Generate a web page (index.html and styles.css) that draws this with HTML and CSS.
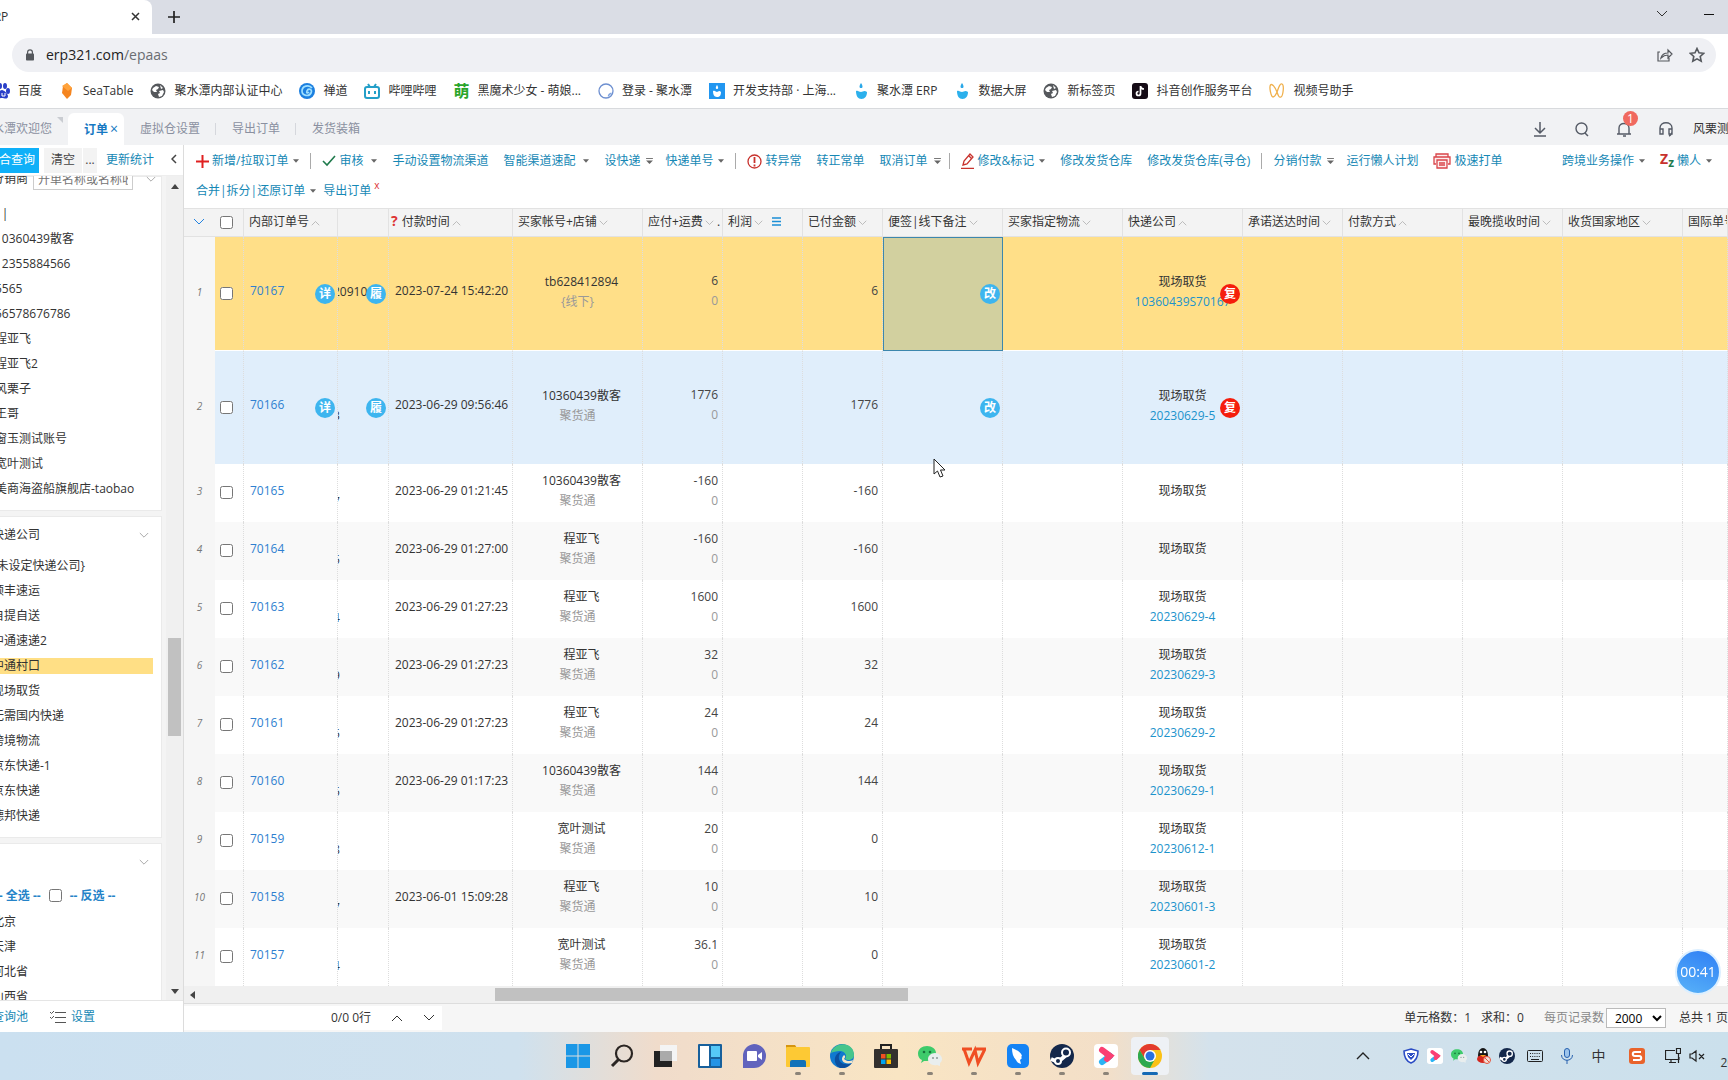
FILE: index.html
```html
<!DOCTYPE html>
<html lang="zh-CN">
	<head>
		<meta charset="utf-8">
		<title>聚水潭 ERP</title>
		<link rel="stylesheet" href="styles.css">
	</head>
	<body>
		<!-- 公用图标 -->
		<svg class="defs" width="0" height="0">
			<symbol id="up" viewBox="0 0 12 8"><path d="M1 7l5-5 5 5" fill="none" stroke="currentColor"/></symbol>
			<symbol id="down" viewBox="0 0 12 8"><path d="M1 1l5 5 5-5" fill="none" stroke="currentColor"/></symbol>
			<symbol id="caret" viewBox="0 0 7 4"><path d="M0 0h7L3.500 4z" fill="#666"/></symbol>
			<symbol id="caret2" viewBox="0 0 8 7"><path d="M0 .5h8" stroke="#555"/><path d="M0 3h8L4 7z" fill="#666"/></symbol>
			<symbol id="globe" viewBox="0 0 16 16"><circle cx="8" cy="8" r="7.500" fill="#55585c"/><path d="M3 5l3-2 3 1-1 2-2 1 1 2H4L2 7zM9 8l4-1 1 2-2 4-3 1-1-3 2-1zM10 2l3 3-2 1z" fill="#fff"/></symbol>
			<symbol id="drop" viewBox="0 0 16 16"><path d="M8 0c2 3 2 5 0 5S6 3 8 0z" fill="#29a7e8"/><path d="M3 8c2-1 3 1 5 1s3-2 6 0c0 4-2 7-5.500 7S3 13 3 8z" fill="#2cb0ec"/></symbol>
			<symbol id="wechat" viewBox="0 0 24 24"><path d="M9 2c5 0 9 3 9 7s-4 8-9 8l-3 0-3 2 1-3C1 15 0 12 0 9.500 0 5 4 2 9 2z" fill="#3ecb6b"/><circle cx="6" cy="8" r="1.300" fill="#17733a"/><circle cx="12" cy="8" r="1.300" fill="#17733a"/><path d="M17 9c4 0 7 3 7 6 0 2-1 3-2 4v3l-3-1c-5 1-9-2-9-6 0-3 3-6 7-6z" fill="#e9eeee"/><circle cx="15" cy="14" r="1" fill="#8a9a96"/><circle cx="19" cy="14" r="1" fill="#8a9a96"/></symbol>
			<symbol id="steam" viewBox="0 0 24 24"><circle cx="12" cy="12" r="12" fill="#14284b"/><path d="M1 15l7 3 7-6" stroke="#fff" stroke-width="4" fill="none"/><circle cx="16" cy="8.500" r="4" fill="#14284b" stroke="#fff" stroke-width="2"/><circle cx="8" cy="17" r="3" fill="#14284b" stroke="#fff" stroke-width="2"/></symbol>
			<symbol id="play" viewBox="0 0 24 24"><rect width="24" height="24" rx="4" fill="#fff"/><path d="M8 6l8 6" stroke="#fb3f72" stroke-width="6" stroke-linecap="round"/><path d="M8 18l8-6" stroke="#2bb4f4" stroke-width="6" stroke-linecap="round"/><path d="M13 10l3 2-3 3" stroke="#fb3f72" stroke-width="6" fill="none" stroke-linecap="round"/></symbol>
		</svg>

		<!-- 浏览器标签 -->
		<div class="tabs">
			<div class="tab"><span>ERP</span><button aria-label="关闭"><svg width="9" height="9" viewBox="0 0 9 9"><path d="M1 1l7 7M8 1L1 8" stroke="#333" stroke-width="1.500"/></svg></button></div>
			<button class="newtab" aria-label="新标签"><svg width="12" height="12" viewBox="0 0 12 12"><path d="M6 0v12M0 6h12" stroke="#222" stroke-width="1.700"/></svg></button>
			<div class="win">
				<button aria-label="搜索标签"><svg width="12" height="8"><use href="#down"/></svg></button>
				<button aria-label="最小化"><svg width="10" height="8"><path d="M0 4.500h10" stroke="#111"/></svg></button>
			</div>
		</div>
		<div class="address">
			<div class="url">
				<svg width="8" height="12" viewBox="0 0 10 14"><rect y="5" width="10" height="9" rx="1" fill="#55585d"/><path d="M2 6V3.500a3 3 0 016 0V6" fill="none" stroke="#55585d" stroke-width="1.500"/></svg>
				<p>erp321.com<span>/epaas</span></p>
				<button aria-label="分享"><svg width="16" height="16" viewBox="0 0 16 16"><path d="M3 5H1v9h11v-3M4 11c1-4 4-5 7-5V3l4 4-4 4V8C8 8 6 9 4 11z" fill="none" stroke="#55585d" stroke-width="1.200"/></svg></button>
				<button aria-label="收藏"><svg width="16" height="16" viewBox="0 0 16 16"><path d="M8 1.500l2 4.300 4.700.5-3.500 3.200 1 4.700L8 11.800l-4.200 2.400 1-4.700L1.300 6.300 6 5.800z" fill="none" stroke="#55585d" stroke-width="1.600"/></svg></button>
			</div>
		</div>
		<div class="bookmarks">
			<a href="#"><svg width="16" height="16" viewBox="0 0 16 16"><g fill="#2a3fc8"><ellipse cx="2" cy="7" rx="2" ry="3"/><ellipse cx="6" cy="3" rx="2" ry="3"/><ellipse cx="11" cy="3" rx="2" ry="3"/><ellipse cx="14" cy="8" rx="2" ry="3"/><path d="M8 7c2 0 6 4 6 6 0 4-4 2-6 2s-6 2-6-2c0-2 4-6 6-6z"/></g><path d="M8 10v3h3v-3" stroke="#fff" fill="none"/></svg>百度</a>
			<a href="#"><svg width="16" height="16" viewBox="0 0 16 16"><path d="M8 0l5 5-1 7-4 4-5-6 1-7z" fill="#f5851f"/><path d="M8 0l5 5-4 3-6-5z" fill="#ffa33c"/></svg>SeaTable</a>
			<a href="#"><svg width="16" height="16"><use href="#globe"/></svg>聚水潭内部认证中心</a>
			<a href="#"><svg width="16" height="16" viewBox="0 0 16 16"><circle cx="8" cy="8" r="8" fill="#1b7fe0"/><path d="M13 5C10 1 3 3 3 8s7 6 9 2-3-5-4-2 1 2 2 1" fill="none" stroke="#9fe0ff" stroke-width="1.700"/></svg>禅道</a>
			<a href="#"><svg width="16" height="16" viewBox="0 0 16 16"><rect x="1" y="4" width="14" height="11" rx="2" fill="none" stroke="#249fc8" stroke-width="2"/><path d="M4 1l2 3M12 1l-2 3M5 8v3M11 8v3" stroke="#249fc8" stroke-width="2"/></svg>哔哩哔哩</a>
			<a href="#"><b class="moe">萌</b>黑魔术少女 - 萌娘...</a>
			<a href="#"><svg width="16" height="16" viewBox="0 0 16 16"><circle cx="8" cy="8" r="7" fill="none" stroke="#6d8fd0" stroke-width="1.300"/><path d="M14 10c-2-1-5 2-4 4z" fill="#7fa3e0"/></svg>登录 - 聚水潭</a>
			<a href="#"><svg width="16" height="16" viewBox="0 0 16 16"><rect width="16" height="16" fill="#2196f0"/><path d="M8 2c2 3 1 4 0 4S6 5 8 2zM4 8c2-1 3 1 4 1s2-2 4 0c0 3-1 5-4 5s-4-3-4-6z" fill="#fff"/></svg>开发支持部 · 上海...</a>
			<a href="#"><svg width="16" height="16"><use href="#drop"/></svg>聚水潭 ERP</a>
			<a href="#"><svg width="16" height="16"><use href="#drop"/></svg>数据大屏</a>
			<a href="#"><svg width="16" height="16"><use href="#globe"/></svg>新标签页</a>
			<a href="#"><svg width="16" height="16" viewBox="0 0 16 16"><rect width="16" height="16" rx="3" fill="#150b16"/><path d="M8.500 3v7.500a2 2 0 11-2-2M8.500 3c0 2 1.500 3 3.500 3" fill="none" stroke="#fff" stroke-width="1.700"/></svg>抖音创作服务平台</a>
			<a href="#"><svg width="16" height="16" viewBox="0 0 16 16"><path d="M8 9C6 4 3 0 1.500 2S2 14 4 14s3-3 4-5 2.500-9 5-8 1 12-1 13-3-2-4-5z" fill="none" stroke="#f0b04c" stroke-width="1.300"/></svg>视频号助手</a>
		</div>

		<!-- 系统标签 -->
		<div class="apptabs">
			<a href="#" class="first">聚水潭欢迎您</a>
			<a href="#" class="on">订单<i>×</i></a>
			<a href="#">虚拟仓设置</a>
			<a href="#">导出订单</a>
			<a href="#">发货装箱</a>
			<div class="user">
				<button aria-label="下载"><svg width="14" height="16" viewBox="0 0 14 16"><path d="M7 1v10M2 7l5 5 5-5M1 15h12" fill="none" stroke="#555b66" stroke-width="1.500"/></svg></button>
				<button aria-label="搜索"><svg width="14" height="16" viewBox="0 0 14 16"><circle cx="6.500" cy="7.500" r="5.500" fill="none" stroke="#555b66" stroke-width="1.400"/><path d="M10 12l3 3" stroke="#555b66" stroke-width="1.500"/></svg></button>
				<button aria-label="消息"><svg width="14" height="16" viewBox="0 0 14 16"><path d="M0 13h14M2 13V7c0-6 10-6 10 0v6M6 15h3" fill="none" stroke="#555b66" stroke-width="1.400"/></svg><em>1</em></button>
				<button aria-label="客服"><svg width="14" height="16" viewBox="0 0 14 16"><path d="M1 11V7c0-7 12-7 12 0v4c0 2-1 3-3 4M1 8h3v5H1zM10 8h3v5h-3z" fill="none" stroke="#555b66" stroke-width="1.400"/></svg></button>
				<span>风栗测试</span>
			</div>
		</div>

		<div class="main">
			<!-- 左侧查询 -->
			<div class="side">
				<div class="sidetop">
					<button class="query">组合查询</button>
					<button class="clear">清空</button>
					<button class="more">...</button>
					<a href="#">更新统计</a>
					<button class="fold" aria-label="收起"><svg width="6" height="10" viewBox="0 0 6 10"><path d="M5 1L1 5l4 4" fill="none" stroke="#444" stroke-width="1.500"/></svg></button>
				</div>
				<div class="sidebody">
					<div class="panels">
						<div class="panel">
							<div class="dealer"><label for="dealer">分销商</label><input id="dealer" type="text" placeholder="开单名称或名称收"><svg width="10" height="7"><use href="#down"/></svg></div>
							<ul class="in">
								<li>1|</li>
								<li>10360439散客</li>
								<li>12355884566</li>
								<li>5565</li>
								<li>56578676786</li>
								<li>程亚飞</li>
								<li>程亚飞2</li>
								<li>风栗子</li>
								<li>王哥</li>
								<li>窗玉测试账号</li>
								<li>宽叶测试</li>
								<li>美商海盗船旗舰店-taobao</li>
							</ul>
						</div>
						<div class="panel">
							<h4>快递公司<svg width="10" height="7"><use href="#down"/></svg></h4>
							<ul>
								<li>{未设定快递公司}</li>
								<li>顺丰速运</li>
								<li>自提自送</li>
								<li>中通速递2</li>
								<li class="sel"><span>中通村口</span></li>
								<li>现场取货</li>
								<li>无需国内快递</li>
								<li>跨境物流</li>
								<li>京东快递-1</li>
								<li>京东快递</li>
								<li>德邦快递</li>
							</ul>
						</div>
						<div class="panel">
							<h4><svg width="10" height="7"><use href="#down"/></svg></h4>
							<div class="all"><a href="#">-- 全选 --</a><label><input type="checkbox"><span>-- 反选 --</span></label></div>
							<ul>
								<li>北京</li>
								<li>天津</li>
								<li>河北省</li>
								<li>山西省</li>
							</ul>
						</div>
					</div>
					<div class="vbar">
						<svg width="8" height="5" viewBox="0 0 10 6"><path d="M0 6l5-6 5 6z" fill="#444"/></svg>
						<i></i>
						<svg width="8" height="5" viewBox="0 0 10 6"><path d="M0 0l5 6 5-6z" fill="#444"/></svg>
					</div>
				</div>
				<div class="sidefoot">
					<a href="#">查询池</a>
					<a href="#"><svg width="16" height="12" viewBox="0 0 16 12"><path d="M5 1.500h11M5 6.500h11M5 11.500h11M0 1l1.500 1.500L4 0M0 6l1.500 1.500L4 5" fill="none" stroke="#555"/></svg>设置</a>
				</div>
			</div>

			<div class="content">
				<div class="tools">
					<div class="line">
						<button><svg width="13" height="13" viewBox="0 0 13 13"><path d="M6.500 0v13M0 6.500h13" stroke="#e02020" stroke-width="2"/></svg>新增/拉取订单<svg class="c" width="6" height="4"><use href="#caret"/></svg></button>
						<i></i>
						<button><svg width="14" height="12" viewBox="0 0 14 12"><path d="M1 6l4 4 8-9" fill="none" stroke="#1f7a4c" stroke-width="1.600"/></svg>审核<svg class="c w" width="6" height="4"><use href="#caret"/></svg></button>
						<button>手动设置物流渠道</button>
						<button>智能渠道速配<svg class="c w" width="6" height="4"><use href="#caret"/></svg></button>
						<button>设快递<svg class="c n" width="7" height="6"><use href="#caret2"/></svg></button>
						<button>快递单号<svg class="c" width="6" height="4"><use href="#caret"/></svg></button>
						<i></i>
						<button><svg width="15" height="15" viewBox="0 0 15 15"><circle cx="7.500" cy="7.500" r="6.500" fill="none" stroke="#c8322d" stroke-width="1.300"/><path d="M7.500 3v6M7.500 10.500v2" stroke="#c8322d" stroke-width="1.800"/></svg>转异常</button>
						<button>转正常单</button>
						<button>取消订单<svg class="c n" width="7" height="6"><use href="#caret2"/></svg></button>
						<i></i>
						<button><svg width="14" height="16" viewBox="0 0 14 16"><path d="M0 15.300h13M2 12l1-4 6-7 3 3-6 7zM8 3l3 3" fill="none" stroke="#c8322d" stroke-width="1.300"/></svg>修改&amp;标记<svg class="c" width="6" height="4"><use href="#caret"/></svg></button>
						<button>修改发货仓库</button>
						<button>修改发货仓库(寻仓)</button>
						<i></i>
						<button>分销付款<svg class="c n" width="7" height="6"><use href="#caret2"/></svg></button>
						<button>运行懒人计划</button>
						<button><svg width="18" height="16" viewBox="0 0 18 16"><path d="M3 4V1h12v3M3 11H1V4h16v7h-2M4 7h10v8H4zM6 10h6M6 12h6" fill="#fdeeee" stroke="#d9444a" stroke-width="1.300"/></svg>极速打单</button>
						<button class="last">跨境业务操作<svg class="c" width="6" height="4"><use href="#caret"/></svg></button>
						<button><b class="zz">Z<small>z</small></b>懒人<svg class="c" width="6" height="4"><use href="#caret"/></svg></button>
					</div>
					<div class="line second">
						<button>合并|拆分|还原订单<svg class="c" width="6" height="4"><use href="#caret"/></svg></button>
						<button>导出订单<sup>x</sup></button>
					</div>
				</div>

				<div class="grid">
					<table>
						<colgroup>
							<col class="w31"><col class="w29"><col class="w94"><col class="w51"><col class="w124"><col class="w130">
							<col class="w80"><col class="w80"><col class="w80"><col class="w120"><col class="w120"><col class="w120">
							<col class="w100"><col class="w120"><col class="w100"><col class="w120"><col>
						</colgroup>
						<thead>
							<tr>
								<th class="blue"><svg width="12" height="8"><use href="#down"/></svg></th>
								<th><input type="checkbox" aria-label="全选"></th>
								<th>内部订单号<svg width="9" height="6"><use href="#up"/></svg></th>
								<th></th>
								<th class="q"><b>?</b>付款时间<svg width="9" height="6"><use href="#up"/></svg></th>
								<th>买家帐号+店铺<svg width="9" height="6"><use href="#down"/></svg></th>
								<th>应付+运费<svg width="9" height="6"><use href="#down"/></svg> .</th>
								<th>利润<svg width="9" height="6"><use href="#down"/></svg><svg class="menu" width="9" height="9" viewBox="0 0 9 9"><path d="M0 1h9M0 4.500h9M0 8h9" stroke="#1b8fd6" stroke-width="1.300"/></svg></th>
								<th>已付金额<svg width="9" height="6"><use href="#down"/></svg></th>
								<th>便签|线下备注<svg width="9" height="6"><use href="#down"/></svg></th>
								<th>买家指定物流<svg width="9" height="6"><use href="#down"/></svg></th>
								<th>快递公司<svg width="9" height="6"><use href="#up"/></svg></th>
								<th>承诺送达时间<svg width="9" height="6"><use href="#down"/></svg></th>
								<th>付款方式<svg width="9" height="6"><use href="#up"/></svg></th>
								<th>最晚揽收时间<svg width="9" height="6"><use href="#down"/></svg></th>
								<th>收货国家地区<svg width="9" height="6"><use href="#down"/></svg></th>
								<th>国际单号</th>
							</tr>
						</thead>
						<tbody>
							<tr class="yellow">
								<td>1</td>
								<td><input type="checkbox" aria-label="70167"></td>
								<td><a href="#">70167</a><em class="tag">详</em></td>
								<td><p class="full">20910</p><em class="tag">履</em></td>
								<td>2023-07-24 15:42:20</td>
								<td><p>tb628412894</p><p>{线下}</p></td>
								<td><p>6</p><p>0</p></td>
								<td></td>
								<td>6</td>
								<td class="cur"><em class="tag">改</em></td>
								<td></td>
								<td><p>现场取货</p><a href="#">10360439S70167</a><em class="tag red">复</em></td>
								<td></td><td></td><td></td><td></td><td></td>
							</tr>
							<tr class="hover">
								<td>2</td>
								<td><input type="checkbox" aria-label="70166"></td>
								<td><a href="#">70166</a><em class="tag">详</em></td>
								<td><p class="cut">3</p><em class="tag">履</em></td>
								<td>2023-06-29 09:56:46</td>
								<td><p>10360439散客</p><p>聚货通</p></td>
								<td><p>1776</p><p>0</p></td>
								<td></td>
								<td>1776</td>
								<td><em class="tag">改</em></td>
								<td></td>
								<td><p>现场取货</p><a href="#">20230629-5</a><em class="tag red">复</em></td>
								<td></td><td></td><td></td><td></td><td></td>
							</tr>
							<tr>
								<td>3</td>
								<td><input type="checkbox" aria-label="70165"></td>
								<td><a href="#">70165</a></td>
								<td><p class="cut">7</p></td>
								<td>2023-06-29 01:21:45</td>
								<td><p>10360439散客</p><p>聚货通</p></td>
								<td><p>-160</p><p>0</p></td>
								<td></td>
								<td>-160</td>
								<td></td>
								<td></td>
								<td><p>现场取货</p></td>
								<td></td><td></td><td></td><td></td><td></td>
							</tr>
							<tr>
								<td>4</td>
								<td><input type="checkbox" aria-label="70164"></td>
								<td><a href="#">70164</a></td>
								<td><p class="cut">5</p></td>
								<td>2023-06-29 01:27:00</td>
								<td><p>程亚飞</p><p>聚货通</p></td>
								<td><p>-160</p><p>0</p></td>
								<td></td>
								<td>-160</td>
								<td></td>
								<td></td>
								<td><p>现场取货</p></td>
								<td></td><td></td><td></td><td></td><td></td>
							</tr>
							<tr>
								<td>5</td>
								<td><input type="checkbox" aria-label="70163"></td>
								<td><a href="#">70163</a></td>
								<td><p class="cut">4</p></td>
								<td>2023-06-29 01:27:23</td>
								<td><p>程亚飞</p><p>聚货通</p></td>
								<td><p>1600</p><p>0</p></td>
								<td></td>
								<td>1600</td>
								<td></td>
								<td></td>
								<td><p>现场取货</p><a href="#">20230629-4</a></td>
								<td></td><td></td><td></td><td></td><td></td>
							</tr>
							<tr>
								<td>6</td>
								<td><input type="checkbox" aria-label="70162"></td>
								<td><a href="#">70162</a></td>
								<td><p class="cut">9</p></td>
								<td>2023-06-29 01:27:23</td>
								<td><p>程亚飞</p><p>聚货通</p></td>
								<td><p>32</p><p>0</p></td>
								<td></td>
								<td>32</td>
								<td></td>
								<td></td>
								<td><p>现场取货</p><a href="#">20230629-3</a></td>
								<td></td><td></td><td></td><td></td><td></td>
							</tr>
							<tr>
								<td>7</td>
								<td><input type="checkbox" aria-label="70161"></td>
								<td><a href="#">70161</a></td>
								<td><p class="cut">5</p></td>
								<td>2023-06-29 01:27:23</td>
								<td><p>程亚飞</p><p>聚货通</p></td>
								<td><p>24</p><p>0</p></td>
								<td></td>
								<td>24</td>
								<td></td>
								<td></td>
								<td><p>现场取货</p><a href="#">20230629-2</a></td>
								<td></td><td></td><td></td><td></td><td></td>
							</tr>
							<tr>
								<td>8</td>
								<td><input type="checkbox" aria-label="70160"></td>
								<td><a href="#">70160</a></td>
								<td><p class="cut">5</p></td>
								<td>2023-06-29 01:17:23</td>
								<td><p>10360439散客</p><p>聚货通</p></td>
								<td><p>144</p><p>0</p></td>
								<td></td>
								<td>144</td>
								<td></td>
								<td></td>
								<td><p>现场取货</p><a href="#">20230629-1</a></td>
								<td></td><td></td><td></td><td></td><td></td>
							</tr>
							<tr>
								<td>9</td>
								<td><input type="checkbox" aria-label="70159"></td>
								<td><a href="#">70159</a></td>
								<td><p class="cut">8</p></td>
								<td></td>
								<td><p>宽叶测试</p><p>聚货通</p></td>
								<td><p>20</p><p>0</p></td>
								<td></td>
								<td>0</td>
								<td></td>
								<td></td>
								<td><p>现场取货</p><a href="#">20230612-1</a></td>
								<td></td><td></td><td></td><td></td><td></td>
							</tr>
							<tr>
								<td>10</td>
								<td><input type="checkbox" aria-label="70158"></td>
								<td><a href="#">70158</a></td>
								<td><p class="cut">7</p></td>
								<td>2023-06-01 15:09:28</td>
								<td><p>程亚飞</p><p>聚货通</p></td>
								<td><p>10</p><p>0</p></td>
								<td></td>
								<td>10</td>
								<td></td>
								<td></td>
								<td><p>现场取货</p><a href="#">20230601-3</a></td>
								<td></td><td></td><td></td><td></td><td></td>
							</tr>
							<tr>
								<td>11</td>
								<td><input type="checkbox" aria-label="70157"></td>
								<td><a href="#">70157</a></td>
								<td><p class="cut">4</p></td>
								<td></td>
								<td><p>宽叶测试</p><p>聚货通</p></td>
								<td><p>36.1</p><p>0</p></td>
								<td></td>
								<td>0</td>
								<td></td>
								<td></td>
								<td><p>现场取货</p><a href="#">20230601-2</a></td>
								<td></td><td></td><td></td><td></td><td></td>
							</tr>
						</tbody>
					</table>
				</div>
				<div class="hbar">
					<svg width="5" height="8" viewBox="0 0 5 8"><path d="M5 0v8L0 4z" fill="#444"/></svg>
					<i></i>
				</div>
				<div class="status">
					<div class="find">
						<span>0/0 0行</span>
						<button aria-label="上一个"><svg width="12" height="8"><use href="#up"/></svg></button>
						<button aria-label="下一个"><svg width="12" height="8"><use href="#down"/></svg></button>
					</div>
					<div class="sum">
						<span>单元格数：1</span>
						<span>求和：0</span>
						<label for="size">每页记录数</label>
						<select id="size"><option>2000</option></select>
						<span>总共 1 页</span>
					</div>
				</div>
			</div>
		</div>

		<!-- 任务栏 -->
		<div class="taskbar">
			<div class="apps">
				<button aria-label="开始"><svg width="24" height="24" viewBox="0 0 24 24"><path d="M0 0h11.500v11.500H0zM12.500 0H24v11.500H12.500zM0 12.500h11.500V24H0zM12.500 12.500H24V24H12.500z" fill="#1a97e6"/></svg></button>
				<button aria-label="搜索"><svg width="24" height="24" viewBox="0 0 24 24"><circle cx="14" cy="9.500" r="8" fill="none" stroke="#2b2623" stroke-width="2.200"/><path d="M8.500 15.500L2 22" stroke="#2b2623" stroke-width="3"/></svg></button>
				<button aria-label="任务视图"><svg width="24" height="24" viewBox="0 0 24 24"><rect x="6" y="1" width="17" height="16" fill="#f4f4f4"/><rect y="7" width="18" height="16" fill="#222"/><rect x="6" y="7" width="12" height="10" fill="#aaa"/></svg></button>
				<button aria-label="小组件"><svg width="24" height="24" viewBox="0 0 24 24"><rect width="24" height="24" rx="1" fill="#17609c"/><rect x="2" y="2" width="9" height="20" fill="#fff"/><rect x="13" y="2" width="9" height="11" fill="#56c8f7"/><rect x="13" y="15" width="9" height="7" fill="#2494e6"/></svg></button>
				<button aria-label="聊天"><svg width="24" height="24" viewBox="0 0 24 24"><path d="M12 0a12 12 0 110 24H1V12A12 12 0 0112 0z" fill="#6163bd"/><rect x="5" y="7" width="10" height="10" rx="1" fill="#fff"/><path d="M16 11l4-3v8l-4-3z" fill="#fff"/></svg></button>
				<button class="run" aria-label="文件"><svg width="24" height="24" viewBox="0 0 24 24"><path d="M0 1h9l2 3H0z" fill="#d69510"/><rect y="3" width="24" height="20" rx="1" fill="#fdc934"/><path d="M4 23v-5q0-2 2-2h12q2 0 2 2v5z" fill="#1272b9"/></svg></button>
				<button class="run" aria-label="Edge"><svg width="24" height="24" viewBox="0 0 24 24"><circle cx="12" cy="12" r="12" fill="#1079cf"/><path d="M1 9C4-3 24-3 24 11c0 5-6 6-9 4 3-4-1-8-5-8-4 0-7 1-9 2z" fill="#46c58c"/><path d="M11 8c-5 6-1 14 8 12l3-1c-3 4-8 6-12 5C2 20 4 9 11 8z" fill="#0c4f9e"/><path d="M14 11c2 1 1 3 0 4 2 2 6 3 9 1l-1 3c-8 2-13-3-8-8z" fill="#f5e6c8"/></svg></button>
				<button aria-label="商店"><svg width="24" height="24" viewBox="0 0 24 24"><path d="M7 6V1h10v5" fill="none" stroke="#222" stroke-width="2"/><rect y="5" width="24" height="19" rx="1" fill="#33302e"/><path d="M7 10h4.500v4.500H7z" fill="#f25022"/><path d="M12.500 10H17v4.500h-4.500z" fill="#7fba00"/><path d="M7 15.500h4.500V20H7z" fill="#00a4ef"/><path d="M12.500 15.500H17V20h-4.500z" fill="#ffb900"/></svg></button>
				<button class="run" aria-label="微信"><svg width="24" height="24"><use href="#wechat"/></svg></button>
				<button class="run" aria-label="WPS"><svg width="24" height="24" viewBox="0 0 24 24"><path d="M0 5h10M2 5l5 14 6-13 3 13 7-14h-9" fill="none" stroke="#f04e23" stroke-width="3"/></svg></button>
				<button class="run" aria-label="钉钉"><svg width="24" height="24" viewBox="0 0 24 24"><rect x="1" width="22" height="24" rx="5" fill="#1483f5"/><path d="M6 4c5 2 9 4 10 8l-1 1 1 1-2 2 1 4c-3-1-4-2-5-4-3-3-4-7-4-12z" fill="#fff"/></svg></button>
				<button class="run" aria-label="Steam"><svg width="24" height="24"><use href="#steam"/></svg></button>
				<button class="run" aria-label="视频"><svg width="24" height="24"><use href="#play"/></svg></button>
				<button class="run now" aria-label="Chrome"><svg width="24" height="24" viewBox="0 0 24 24"><circle cx="12" cy="12" r="12" fill="#fbc116"/><path d="M1.600 6A12 12 0 0122.400 6H12l-5 9z" fill="#e33b2e"/><path d="M1.600 6A12 12 0 0012 24l5-9-10 0z" fill="#2da94f"/><circle cx="12" cy="12" r="6" fill="#fff"/><circle cx="12" cy="12" r="4.500" fill="#2a70e0"/></svg></button>
			</div>
			<div class="tray">
				<svg class="first" width="16" height="16" viewBox="0 0 16 16"><path d="M2 11l6-6 6 6" fill="none" stroke="#222" stroke-width="1.400"/></svg>
				<svg width="16" height="16" viewBox="0 0 16 16"><path d="M8 1l7 2c0 6-2 10-7 12C3 13 1 9 1 3z" fill="#fff" stroke="#2b4cc4" stroke-width="1.600"/><path d="M4 5h8l-1 4-3 3-3-3z" fill="#2b4cc4"/><path d="M5 6l3 3 3-3" fill="none" stroke="#fff"/></svg>
				<svg width="16" height="16"><use href="#play"/></svg>
				<svg width="16" height="16"><use href="#wechat"/></svg>
				<svg width="16" height="16" viewBox="0 0 16 16"><ellipse cx="8" cy="7" rx="5" ry="7" fill="#151515"/><ellipse cx="8" cy="11" rx="6" ry="4" fill="#d3271e"/><circle cx="6" cy="4" r="1.300" fill="#fff"/><circle cx="10" cy="4" r="1.300" fill="#fff"/><path d="M5 7h6l-3 2z" fill="#f9a51c"/><circle cx="12" cy="12" r="3.500" fill="#f4ddd5" stroke="#e2543e"/><path d="M10 10l4 4" stroke="#e2543e"/></svg>
				<svg class="mid" width="16" height="16"><use href="#steam"/></svg>
				<svg class="mid" width="16" height="16" viewBox="0 0 16 16"><rect x=".5" y="2.500" width="15" height="11" rx="1" fill="none" stroke="#222"/><path d="M3 5.500h10M3 8.500h10" stroke="#222" stroke-dasharray="1 1.200"/><path d="M4 11.500h8" stroke="#222"/></svg>
				<svg class="mic" width="16" height="16" viewBox="0 0 16 16"><rect x="5.500" y=".5" width="5" height="9" rx="2.500" fill="#9cc4ec" stroke="#2660ae"/><path d="M2.500 7c0 7 11 7 11 0M8 12v4" fill="none" stroke="#2660ae"/></svg>
				<span class="ime">中</span>
				<svg class="far" width="16" height="16" viewBox="0 0 16 16"><rect width="16" height="16" rx="3" fill="#e9632b"/><path d="M12 4H6C3 4 3 8 6 8h4c3 0 3 4 0 4H4" fill="none" stroke="#fff" stroke-width="2"/></svg>
				<svg width="16" height="16" viewBox="0 0 16 16"><path d="M10 2.500H.5v9H14V9M4 14.500h7M6 12v2M11.500.5h4v5h-4zM13.500 6v9" fill="none" stroke="#222" stroke-width="1.200"/></svg>
				<svg width="16" height="16" viewBox="0 0 16 16"><path d="M1 6h2l4-3v10l-4-3H1zM10 6l5 5M15 6l-5 5" fill="none" stroke="#222" stroke-width="1.200"/></svg>
				<span class="date">2023</span>
			</div>
		</div>

		<div class="timer">00:41</div>
		<svg class="mouse" width="13" height="20" viewBox="0 0 13 20"><path d="M1 1v15l3.500-3 2.500 6 3-1-2.500-6H12z" fill="#fff" stroke="#222"/></svg>
	</body>
</html>
```
FILE: styles.css
```css
*{margin:0;padding:0;box-sizing:border-box;}
body{display:flex;flex-direction:column;height:100vh;overflow:hidden;font:12px/20px "Open Sans","Noto Sans CJK SC",sans-serif;color:#333;background:#fff;white-space:nowrap;}
ul{list-style:none;}
a{text-decoration:none;color:#1688b5;}
i,em{font-style:normal;}
svg{flex:none;}
svg.defs{position:absolute;}
button{border:0;background:none;font:inherit;color:inherit;}
input[type=checkbox]{width:13px;height:13px;vertical-align:middle;}

/* 浏览器 */
.tabs{display:flex;align-items:center;height:34px;background:#dadde5;}
.tab{display:flex;align-items:center;justify-content:space-between;width:165px;height:34px;margin-left:-13px;padding-right:12px;background:#fff;border-radius:0 8px 0 0;}
.newtab{display:flex;margin-left:16px;}
.win{display:flex;gap:36px;margin-left:auto;padding:0 14px 6px 0;}
.address{padding:4px 12px;}
.url{display:flex;align-items:center;gap:12px;height:34px;padding:0 11px 0 14px;border-radius:17px;background:#eff0f4;}
.url p{flex:1;font-size:14px;color:#222;}
.url span{color:#6a6d72;}
.url button{display:flex;margin-left:4px;}
.bookmarks{display:flex;gap:17px;height:33px;padding-bottom:3px;margin-left:-6px;border-bottom:1px solid #d8dadd;}
.bookmarks a{display:flex;align-items:center;gap:8px;color:#333;}
.moe{width:16px;font-size:16px;color:#2ba52b;}

.apptabs{display:flex;align-items:flex-end;height:36px;background:#f1f2f4;}
.apptabs>a{height:32px;line-height:32px;padding:0 16px;color:#8a90a0;position:relative;}
.apptabs>a.first{width:68px;padding:0;text-indent:-20px;}
.apptabs>a.first::after{content:"";position:absolute;right:5px;top:4px;border:3px solid #c9ccd1;border-left-color:transparent;border-bottom-color:transparent;}
.apptabs>a.on{padding:0 6px 0 16px;background:#fff;border-radius:6px 6px 0 0;color:#1678c2;font-weight:bold;}
.on i{margin-left:2px;font-size:14px;font-weight:normal;}
.apptabs>a.on~a+a::before{content:"";position:absolute;left:-1px;top:10px;height:12px;border-left:1px solid #d5d7dc;}
.user{display:flex;align-items:center;gap:28px;width:195px;height:32px;margin-left:auto;color:#333;}
.user button{display:flex;position:relative;}
.user button em{position:absolute;left:6px;top:-10px;width:15px;height:15px;line-height:15px;border-radius:50%;background:#f0695f;color:#fff;text-align:center;}
.user span{margin-left:-8px;}

.main{flex:1;display:flex;min-height:0;}

/* 左侧 */
.side{width:184px;flex:none;display:flex;flex-direction:column;overflow:hidden;border-right:1px solid #dcdcdc;}
.sidetop{display:flex;align-items:center;height:31px;border-bottom:1px solid #eee;}
.sidetop button{height:25px;background:#f3f3f3;color:#444;}
.sidetop .query{width:52px;margin:0 5px 0 -13px;background:#0fb0f8;color:#fff;text-align:right;padding-right:12px;}
.sidetop .clear{width:38px;}
.sidetop .more{width:14px;margin:0 9px 0 1px;}
.sidetop .fold{margin-left:auto;padding-right:6px;background:none;}
.sidebody{flex:1;display:flex;min-height:0;background:#f4f4f4;}
.panels{width:162px;overflow:hidden;}
.panel{margin-bottom:5px;padding-bottom:9px;background:#fff;border:1px solid #eaeaea;border-left:0;}
.dealer{display:flex;align-items:center;gap:5px;height:24px;margin:-10px 0 0 -8px;}
.dealer input{width:100px;height:22px;margin-right:8px;padding:0 4px;border:1px solid #ccc;font:inherit;}
.panel h4{display:flex;align-items:center;height:36px;margin-left:-8px;padding-right:12px;font-weight:normal;}
.panel svg{color:#999;}
.panel h4 svg{margin-left:auto;}
.panel li{height:25px;line-height:25px;padding-left:8px;margin-left:-16px;}
.panel ul.in{margin:10px 0 0 3px;}
.panel li.sel{display:flex;align-items:center;}
.sel span{width:161px;line-height:16px;background:#ffdf85;}
.all{display:flex;align-items:center;height:29px;padding-top:2px;margin-left:-5px;font-weight:bold;}
.all a{color:#2483c8;}
.all label{display:flex;align-items:center;gap:8px;margin-left:8px;color:#2483c8;}
.vbar{display:flex;flex-direction:column;align-items:center;width:17px;margin-left:auto;padding:8px 0 6px;background:#f0f0f0;}
.vbar i{flex:none;width:13px;height:98px;margin:449px 0 auto;background:#c1c1c1;}
.sidefoot{display:flex;align-items:center;gap:22px;height:32px;margin-left:-8px;border-top:1px solid #e5e5e5;}
.sidefoot a{display:flex;align-items:center;gap:5px;}

/* 工具栏 */
.content{flex:1;display:flex;flex-direction:column;min-width:0;}
.tools{height:63px;padding:1px 16px 0 12px;}
.line{display:flex;align-items:center;gap:15px;height:30px;}
.line.second{gap:7px;}
.line button{display:flex;align-items:center;gap:3px;color:#1688b5;}
.line>i{width:1px;height:16px;margin:0 -4px;background:#aaa;}
.line .c{margin-left:2px;}
.line .w{margin-left:5px;}
.line .n{margin:0 -3px 0 3px;}
.line .last{margin-left:auto;}
.line sup{align-self:flex-start;line-height:8px;color:#d33;}
.zz{color:#c8322d;line-height:16px;font-size:14px;}
.zz small{color:#1f7a4c;font-size:12px;vertical-align:-3px;}

/* 表格 */
.grid{flex:1;min-height:0;overflow:hidden;}
table{width:100%;table-layout:fixed;border-collapse:separate;border-spacing:0;}
.w29{width:29px;}
.w31{width:31px;}
.w51{width:51px;}
.w80{width:80px;}
.w94{width:94px;}
.w100{width:100px;}
.w120{width:120px;}
.w124{width:124px;}
.w130{width:130px;}
th{height:29px;padding:0 0 2px 5px;background:#f3f3f3;border:solid #e2e2e2;border-width:1px 1px 1px 0;font-weight:normal;text-align:left;overflow:hidden;}
th svg{margin-left:2px;color:#aaa;}
th.q{padding-left:2px;}
th.q b{margin-right:4px;color:#d33;font-size:14px;line-height:16px;}
th .menu{margin-left:9px;}
th.blue{padding-left:7px;border-right:0;}
th.blue svg{color:#2483e0;}
td{position:relative;height:58px;padding:0 4px 5px 6px;border-right:1px dotted #ddd;}
tbody tr:nth-child(even) td{background:#f9f9f9;}
tbody tr.yellow td{height:114px;background:#ffdf88;border-bottom:1px solid #fff;}
tbody tr.hover td{height:113px;background:#e0eefb;}
tbody tr td:first-child{padding:0 0 4px;background:#f6f6f6;border:0;text-align:center;font-size:10px;font-style:italic;color:#777;}
tbody tr td:nth-child(2){padding:0 0 2px 5px;}
td a{color:#2f7fd0;}
tbody tr td:nth-child(4){padding:0;}
td:nth-child(6),td:nth-child(12){padding:0 0 4px;text-align:center;}
td:nth-child(7),td:nth-child(9){text-align:right;color:#444;}
td:nth-child(6) p:first-child{padding-left:8px;}
td p+p{color:#999;}
td:nth-child(12) a{color:#1c93cc;}
tbody tr td.cur{background:#d2d09f;border:1px solid #3d87ad;}
.cut{margin-top:17px;overflow:hidden;text-indent:-5px;}
.full{margin-bottom:4px;overflow:hidden;text-indent:-5px;}
.tag{position:absolute;right:2px;top:50%;margin-top:-10px;width:20px;height:20px;line-height:20px;border-radius:50%;background:#3db5ef;color:#fff;text-align:center;font-weight:bold;}
.tag.red{background:#f51d0c;}

.hbar{display:flex;align-items:center;height:17px;padding-left:6px;background:#f0f0f0;}
.hbar i{width:24%;min-width:413px;height:13px;margin-left:300px;background:#c1c1c1;}
.status{display:flex;justify-content:space-between;height:29px;background:#f6f6f6;border-top:1px solid #ddd;}
.find{display:flex;align-items:center;width:258px;height:24px;margin-top:2px;padding-left:147px;background:#fff;}
.find span{margin-right:10px;}
.find button{display:flex;padding:0 10px;}
.sum{display:flex;align-items:center;margin-right:-10px;}
.sum span{margin-right:10px;}
.sum label{margin-left:10px;color:#888;}
.sum select{width:60px;height:20px;margin:0 13px 0 2px;padding-left:4px;border:1px solid #bbb;background:#fff;font:inherit;}

/* 任务栏 */
.taskbar{display:grid;grid-template-columns:1fr auto 1fr;align-items:center;height:48px;background:linear-gradient(90deg,#cbe0f0 0,#cfe1ee 30%,#f0dccb 38%,#f9e5c3 52%,#f3dfc8 64%,#d4e2ec 70%,#cbe0ec 100%);}
.apps{display:flex;grid-column:2;gap:6px;}
.apps button{display:flex;align-items:center;justify-content:center;position:relative;width:38px;height:38px;}
.run::after{content:"";position:absolute;bottom:0;width:6px;height:3px;border-radius:2px;background:#8b8378;}
.apps .now{background:#eef1f5;border-radius:4px;}
.now::after{width:16px;background:#1569b5;}
.tray{display:flex;align-items:center;justify-content:flex-end;gap:8px;margin-right:-20px;}
.tray .first{margin-right:24px;}
.tray .far{margin:0 12px 0 8px;}
.tray .mid{margin-right:4px;}
.tray .mic{margin:0 8px 0 4px;}
.ime{width:16px;margin-right:6px;font-size:14px;text-align:center;}
.date{margin:14px 0 0 8px;}

.timer{position:fixed;right:7px;bottom:85px;width:46px;height:46px;line-height:42px;border:2px solid #dcefff;border-radius:50%;background:linear-gradient(200deg,#2f7ff5,#58b2f8);color:#fff;font-size:14px;text-align:center;}
.mouse{position:fixed;left:933px;top:458px;}
```
